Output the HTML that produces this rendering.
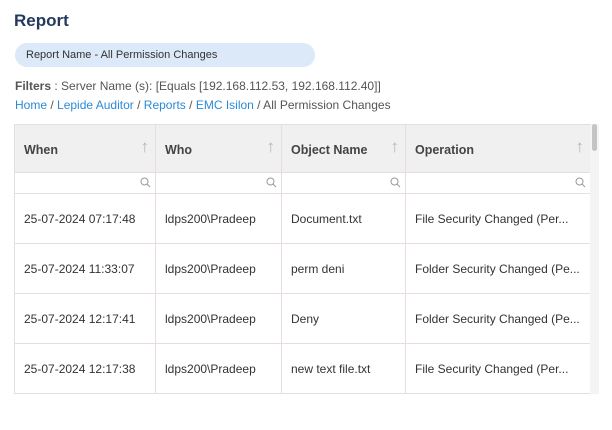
<!DOCTYPE html><html><head><style>
body{margin:0;width:612px;height:430px;background:#fff;font-family:"Liberation Sans",sans-serif;position:relative;overflow:hidden}
.a{position:absolute;white-space:nowrap}
h1{position:absolute;left:14px;top:11px;margin:0;font-size:17px;font-weight:bold;color:#233a5e}
.pill{left:15px;top:43px;width:300px;height:24px;border-radius:12px;background:#dbe9f9;font-size:11px;color:#333;line-height:24px;text-indent:11px}
.f{left:15px;top:79px;font-size:12px;color:#555}
.b{left:15px;top:98px;font-size:12px;color:#555}
.b span{color:#2a8ad8}
table{position:absolute;left:14px;top:124px;border-collapse:collapse;font-size:12px;color:#333;table-layout:fixed}
td,th{border:1px solid #e6dede;padding:0 9px;text-align:left;position:relative;white-space:nowrap;overflow:hidden}
th{background:#f0f0f0;height:45px;font-weight:bold;font-size:12.5px;color:#444;padding-top:2px}
th i{position:absolute;right:6px;top:12px;font-style:normal;color:#b5b5b5;font-size:17px;font-weight:normal}
.fr td{height:20px}
.fr svg{position:absolute;right:4px;top:4px}
.r td{height:49px}
.sb{position:absolute;left:590px;top:124px;width:9px;height:270px;background:#f4f4f4}
.sb div{margin:0 2px;width:5px;height:27px;background:#c4c4c4;border-radius:3px}
</style></head><body>
<h1>Report</h1>
<div class="a pill">Report Name - All Permission Changes</div>
<div class="a f"><b>Filters</b> : Server Name (s): [Equals [192.168.112.53, 192.168.112.40]]</div>
<div class="a b"><span>Home</span> / <span>Lepide Auditor</span> / <span>Reports</span> / <span>EMC Isilon</span> / All Permission Changes</div>
<table>
<colgroup><col style="width:141px"><col style="width:126px"><col style="width:124px"><col style="width:185px"></colgroup>
<tr><th>When<i>↑</i></th><th>Who<i>↑</i></th><th>Object Name<i>↑</i></th><th>Operation<i>↑</i></th></tr>
<tr class="fr"><td><svg width="11" height="11"><circle cx="4.5" cy="4.5" r="3.5" fill="none" stroke="#999"/><line x1="7" y1="7" x2="10" y2="10" stroke="#999"/></svg></td><td><svg width="11" height="11"><circle cx="4.5" cy="4.5" r="3.5" fill="none" stroke="#999"/><line x1="7" y1="7" x2="10" y2="10" stroke="#999"/></svg></td><td><svg width="11" height="11"><circle cx="4.5" cy="4.5" r="3.5" fill="none" stroke="#999"/><line x1="7" y1="7" x2="10" y2="10" stroke="#999"/></svg></td><td><svg width="11" height="11"><circle cx="4.5" cy="4.5" r="3.5" fill="none" stroke="#999"/><line x1="7" y1="7" x2="10" y2="10" stroke="#999"/></svg></td></tr>
<tr class="r"><td>25-07-2024 07:17:48</td><td>ldps200\Pradeep</td><td>Document.txt</td><td>File Security Changed (Per...</td></tr>
<tr class="r"><td>25-07-2024 11:33:07</td><td>ldps200\Pradeep</td><td>perm deni</td><td>Folder Security Changed (Pe...</td></tr>
<tr class="r"><td>25-07-2024 12:17:41</td><td>ldps200\Pradeep</td><td>Deny</td><td>Folder Security Changed (Pe...</td></tr>
<tr class="r"><td>25-07-2024 12:17:38</td><td>ldps200\Pradeep</td><td>new text file.txt</td><td>File Security Changed (Per...</td></tr>
</table>
<div class="sb"><div></div></div>
</body></html>
